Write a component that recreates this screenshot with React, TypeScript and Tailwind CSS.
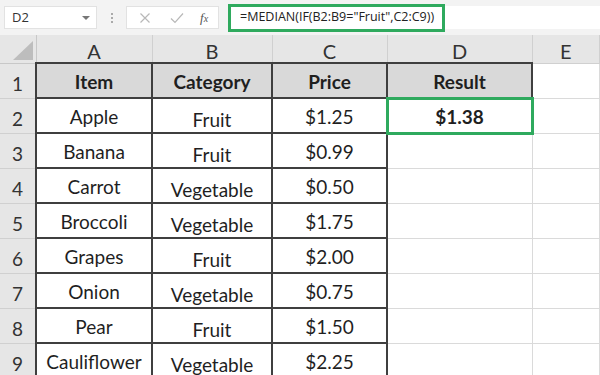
import React from 'react';

const rows = [
  { item: 'Item', cat: 'Category', price: 'Price', result: 'Result' },
  { item: 'Apple', cat: 'Fruit', price: '$1.25', result: '$1.38' },
  { item: 'Banana', cat: 'Fruit', price: '$0.99' },
  { item: 'Carrot', cat: 'Vegetable', price: '$0.50' },
  { item: 'Broccoli', cat: 'Vegetable', price: '$1.75' },
  { item: 'Grapes', cat: 'Fruit', price: '$2.00' },
  { item: 'Onion', cat: 'Vegetable', price: '$0.75' },
  { item: 'Pear', cat: 'Fruit', price: '$1.50' },
  { item: 'Cauliflower', cat: 'Vegetable', price: '$2.25' },
];

const grid = 'border border-[#dadada]';
const dark = 'border-2 border-[#3f3f3f]';
const headCell = 'bg-[#d9d9d9] font-bold text-[19px] pt-[3px]';

export default function App() {
  return (
    <div className="w-[600px] h-[375px] overflow-hidden bg-white font-['Lato',sans-serif] text-[#1f1f1f]">
      {/* formula bar */}
      <div className="h-[35px] bg-[#f3f3f3] flex items-center font-['Open_Sans',sans-serif]">
        <div className="ml-[4px] w-[93px] h-[23px] bg-white border border-[#e2e2e2] flex items-center justify-between pl-[7px] pr-[6px]">
          <span className="text-[13px] text-[#333]">D2</span>
          <span className="w-0 h-0 border-l-[4px] border-r-[4px] border-t-[4px] border-l-transparent border-r-transparent border-t-[#777]" />
        </div>
        <div className="w-[29px] flex flex-col items-center gap-[2px]">
          <span className="w-[2px] h-[2px] bg-[#aaa]" />
          <span className="w-[2px] h-[2px] bg-[#aaa]" />
          <span className="w-[2px] h-[2px] bg-[#aaa]" />
        </div>
        <div className="w-[93px] h-[23px] bg-white border border-[#e2e2e2] flex items-center pl-[12px]">
          <svg width="12" height="12" viewBox="0 0 12 12" className="text-[#b8b8b8]">
            <path d="M1.5 1.5l9 9M10.5 1.5l-9 9" stroke="currentColor" strokeWidth="1.2" fill="none" />
          </svg>
          <svg width="14" height="12" viewBox="0 0 14 12" className="ml-[19px] text-[#b8b8b8]">
            <path d="M1 6.5l4 4L13 1.5" stroke="currentColor" strokeWidth="1.2" fill="none" />
          </svg>
          <span className="ml-[16px] text-[13px] italic font-['Liberation_Serif',serif] text-[#555]">
            f<span className="text-[10px]">x</span>
          </span>
        </div>
        <div className="ml-[10px] flex-1 h-[23px] bg-white flex items-center">
          <div className="h-[28px] w-[217px] -ml-[1px] border-[3px] border-[#2faa5e] flex items-center pl-[9px]">
            <span className="text-[12.5px] text-[#222]">=MEDIAN(IF(B2:B9="Fruit",C2:C9))</span>
          </div>
        </div>
      </div>

      <table className="table-fixed border-collapse w-[600px]">
        <colgroup>
          <col className="w-[36px]" />
          <col className="w-[116px]" />
          <col className="w-[120px]" />
          <col className="w-[115px]" />
          <col className="w-[145px]" />
          <col />
        </colgroup>
        <thead>
          <tr className="h-[28px] bg-[#e6e6e6] text-[20px] leading-[22px] text-[#333]">
            <th className="border-r border-[#c8c8c8] border-b relative p-0">
              <svg width="20" height="19" viewBox="0 0 20 19" className="absolute right-[3px] bottom-[3px]">
                <polygon points="20,0 20,19 0,19" fill="#bdbdbd" />
              </svg>
            </th>
            {['A', 'B', 'C', 'D', 'E'].map((l) => (
              <th key={l} className="font-normal border-r border-b border-[#d0d0d0] p-0 pt-[5px]">
                {l}
              </th>
            ))}
          </tr>
        </thead>
        <tbody>
          {rows.map((r, i) => {
            const head = i === 0;
            return (
              <tr key={i} className="h-[35px] text-[19px] leading-[22px]">
                <td className="bg-[#e6e6e6] border-r border-b border-[#d0d0d0] text-center p-0 pt-[6px] text-[19px] text-[#333]">
                  {i + 1}
                </td>
                <td className={`${dark} text-center p-0 ${head ? headCell : 'pt-[2px]'}`}>{r.item}</td>
                <td className={`${dark} text-center p-0 ${head ? headCell : 'pt-[9px]'}`}>{r.cat}</td>
                <td className={`${dark} text-center p-0 ${head ? headCell : 'pt-[2px]'}`}>{r.price}</td>
                {i === 0 ? (
                  <td className={`${dark} text-center p-0 ${headCell}`}>{r.result}</td>
                ) : i === 1 ? (
                  <td className="border-[3px] border-[#2faa5e] font-bold text-center p-0 pt-[2px]">{r.result}</td>
                ) : (
                  <td className={grid} />
                )}
                <td className={grid} />
              </tr>
            );
          })}
        </tbody>
      </table>
    </div>
  );
}
